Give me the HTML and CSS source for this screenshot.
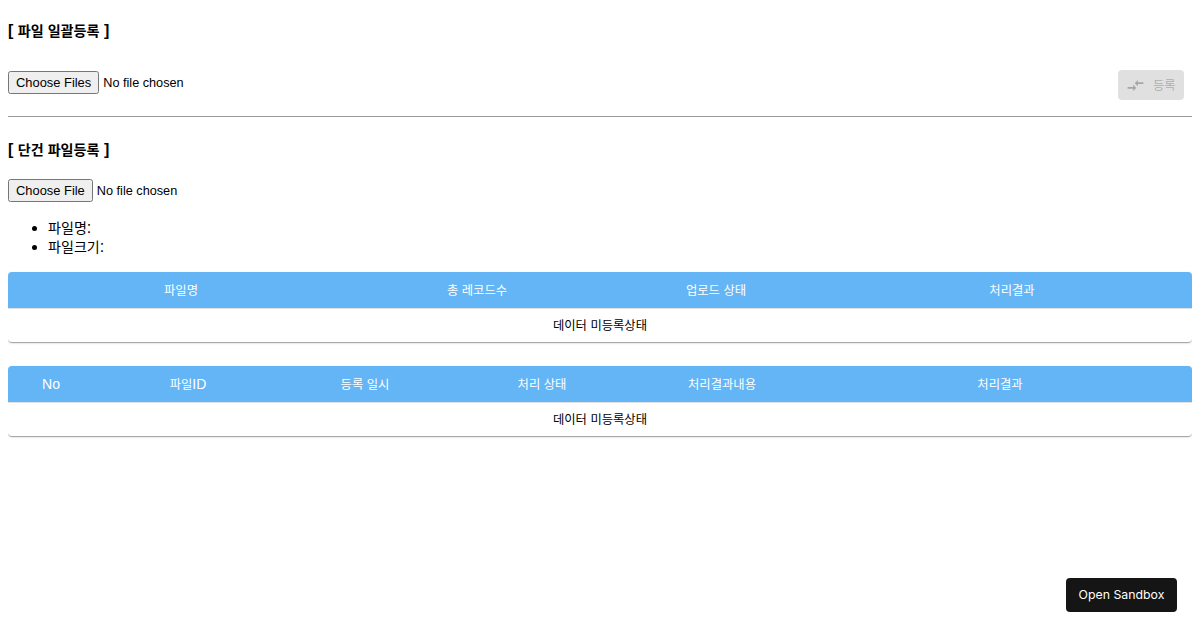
FILE: index.html
```html
<!DOCTYPE html>
<html lang="ko">
<head>
    <meta charset="UTF-8">
    <meta name="viewport" content="width=device-width, initial-scale=1.0">
    <title>파일 등록</title>
    <link rel="stylesheet" href="styles.css">
</head>
<body>
    <h3 class="section-title first">[ <span class="ko">파일 일괄등록</span> ]</h3>
    <div class="upload-row">
        <input class="file-input" type="file" multiple>
        <button class="submit-btn" disabled>
            <svg class="submit-icon" viewBox="0 0 24 24"><path d="M9.01 14H2v2h7.01v3L13 15l-3.99-4zm5.98-1v-3H22V8h-7.01V5L11 9z"/></svg>
            <span class="ko">등록</span>
        </button>
    </div>
    <hr class="divider">

    <h3 class="section-title">[ <span class="ko">단건 파일등록</span> ]</h3>
    <input class="file-input single" type="file">
    <ul class="file-info">
        <li><span class="ko">파일명</span>:</li>
        <li><span class="ko">파일크기</span>:</li>
    </ul>

    <div class="table-box">
        <table>
            <colgroup>
                <col class="a1"><col class="a2"><col class="a3"><col>
            </colgroup>
            <thead>
                <tr>
                    <th><span class="ko">파일명</span></th>
                    <th><span class="ko">총 레코드수</span></th>
                    <th><span class="ko">업로드 상태</span></th>
                    <th><span class="ko">처리결과</span></th>
                </tr>
            </thead>
            <tbody>
                <tr><td colspan="4"><span class="ko">데이터 미등록상태</span></td></tr>
            </tbody>
        </table>
    </div>

    <div class="table-box">
        <table>
            <colgroup>
                <col class="b1"><col class="b2"><col class="b3"><col class="b4"><col class="b5"><col>
            </colgroup>
            <thead>
                <tr>
                    <th>No</th>
                    <th><span class="ko">파일</span>ID</th>
                    <th><span class="ko">등록 일시</span></th>
                    <th><span class="ko">처리 상태</span></th>
                    <th><span class="ko">처리결과내용</span></th>
                    <th><span class="ko">처리결과</span></th>
                </tr>
            </thead>
            <tbody>
                <tr><td colspan="6"><span class="ko">데이터 미등록상태</span></td></tr>
            </tbody>
        </table>
    </div>

    <a class="sandbox-btn" href="#">Open Sandbox</a>
</body>
</html>
```

FILE: styles.css
```css
body {
    font-family: "Liberation Sans", "Noto Sans CJK KR", sans-serif;
    font-size: 16px;
    line-height: 19px;
    margin: 8px;
    color: #000;
    background: #fff;
}
.ko {
    font-family: "Noto Sans CJK KR", sans-serif;
    font-size: 0.88em;
}
.section-title {
    font-size: 16px;
    line-height: 18px;
    font-weight: bold;
    margin: 23px 0 20px;
}
.section-title.first {
    margin: 13px 0 30px;
}
.upload-row {
    display: flex;
    justify-content: space-between;
    align-items: flex-start;
    padding-right: 8px;
}
.file-input {
    font-family: "Liberation Sans", sans-serif;
    font-size: 12.7px;
    margin-top: 1px;
}
.file-input::file-selector-button {
    font-family: "Liberation Sans", sans-serif;
    font-size: 12.9px;
    padding: 2px 6px;
    margin-right: 4px;
}
.file-input.single {
    display: block;
    margin-top: 0;
}
.submit-btn {
    display: flex;
    align-items: center;
    gap: 8px;
    height: 30px;
    width: 66px;
    padding: 0 0 0 8px;
    border: none;
    border-radius: 4px;
    background: rgba(0, 0, 0, 0.12);
    color: rgba(0, 0, 0, 0.26);
    font-size: 14px;
    white-space: nowrap;
}
.submit-icon {
    width: 19px;
    height: 19px;
    fill: rgba(0, 0, 0, 0.26);
}
.divider {
    margin: 16px 0 0;
    border: none;
    border-top: 1px solid #999;
}
.file-info {
    margin: 16px 0 16px;
    padding-left: 40px;
}
.table-box {
    border-radius: 4px;
    overflow: hidden;
    margin-bottom: 24px;
    box-shadow: 0 2px 1px -1px rgba(0,0,0,0.2), 0 1px 1px rgba(0,0,0,0.14), 0 1px 3px rgba(0,0,0,0.12);
}
table {
    width: 100%;
    border-collapse: collapse;
    table-layout: fixed;
    font-size: 14px;
}
th {
    height: 36px;
    padding: 0;
    background: #64b5f6;
    color: #fff;
    font-weight: normal;
    text-align: center;
    border-bottom: 1px solid #e0e0e0;
}
td {
    height: 33px;
    padding: 0;
    text-align: center;
}
.a1 { width: 346px; }
.a2 { width: 246px; }
.a3 { width: 232px; }
.b1 { width: 86px; }
.b2 { width: 188px; }
.b3 { width: 166px; }
.b4 { width: 188px; }
.b5 { width: 172px; }
.sandbox-btn {
    position: fixed;
    right: 23px;
    bottom: 18px;
    width: 111px;
    height: 34px;
    line-height: 34px;
    text-align: center;
    border-radius: 4px;
    background: #151515;
    color: #fff;
    font-family: Inter, sans-serif;
    font-size: 12.3px;
    text-decoration: none;
}
```
